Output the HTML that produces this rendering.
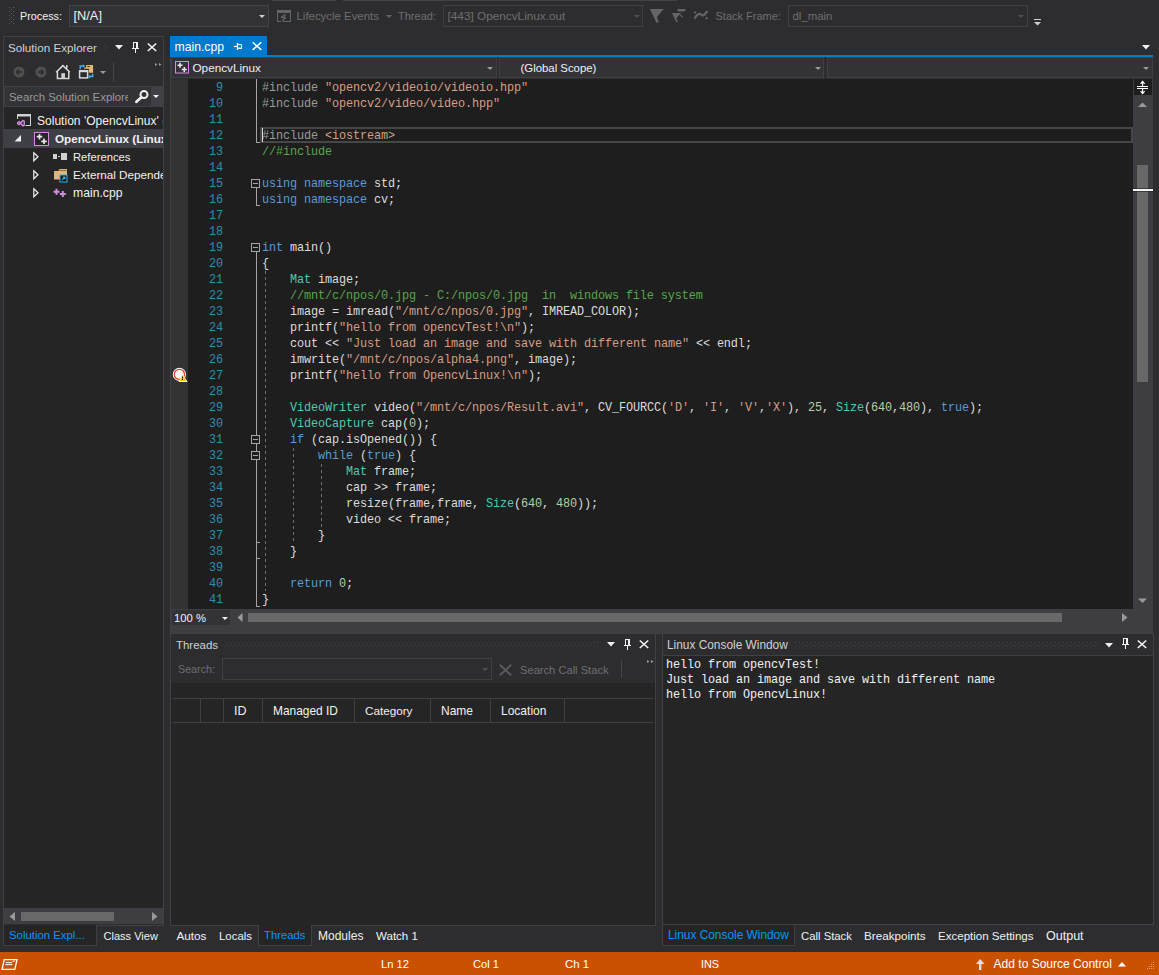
<!DOCTYPE html><html><head><meta charset="utf-8"><style>
html,body{margin:0;padding:0;}
body{width:1159px;height:975px;position:relative;overflow:hidden;background:#2d2d30;}
.a{position:absolute;}
.t{position:absolute;white-space:pre;}
svg.a{overflow:visible;}
</style></head><body>
<div class="a" style="left:272px;top:0px;width:64px;height:1px;background:#434346;"></div>
<div class="a" style="left:343px;top:0px;width:334px;height:1px;background:#434346;"></div>
<svg class="a" style="left:9px;top:7px;" width="5" height="17" viewBox="0 0 5 17"><rect x="0" y="0" width="1" height="1" fill="#5c5c60"/><rect x="4" y="0" width="1" height="1" fill="#5c5c60"/><rect x="2" y="2" width="1" height="1" fill="#5c5c60"/><rect x="0" y="4" width="1" height="1" fill="#5c5c60"/><rect x="4" y="4" width="1" height="1" fill="#5c5c60"/><rect x="2" y="6" width="1" height="1" fill="#5c5c60"/><rect x="0" y="8" width="1" height="1" fill="#5c5c60"/><rect x="4" y="8" width="1" height="1" fill="#5c5c60"/><rect x="2" y="10" width="1" height="1" fill="#5c5c60"/><rect x="0" y="12" width="1" height="1" fill="#5c5c60"/><rect x="4" y="12" width="1" height="1" fill="#5c5c60"/><rect x="2" y="14" width="1" height="1" fill="#5c5c60"/><rect x="0" y="16" width="1" height="1" fill="#5c5c60"/><rect x="4" y="16" width="1" height="1" fill="#5c5c60"/></svg>
<div class="t" style="left:20.00px;top:10px;font-size:10.797px;line-height:12px;color:#f1f1f1;font-family:'Liberation Sans', sans-serif;">Process:</div>
<div class="a" style="left:69px;top:5px;width:200px;height:22px;background:#333337;box-sizing:border-box;border:1px solid #434346;"></div>
<div class="t" style="left:73.50px;top:8px;font-size:12.821px;line-height:15px;color:#f1f1f1;font-family:'Liberation Sans', sans-serif;">[N/A]</div>
<svg class="a" style="left:259px;top:15px;" width="6" height="4" viewBox="0 0 6 4"><polygon points="0,0 6,0 3.0,3.0" fill="#d0d0d0"/></svg>
<svg class="a" style="left:277px;top:10px;" width="14" height="12" viewBox="0 0 14 12"><rect x="0" y="0" width="14" height="3" fill="#656565"/><rect x="0" y="0" width="1" height="12" fill="#656565"/><rect x="13" y="0" width="1" height="12" fill="#656565"/><rect x="0" y="11" width="4" height="1" fill="#656565"/><rect x="6" y="11" width="8" height="1" fill="#656565"/><path d="M8.8 4.4 L4.2 7.3 H8.7 L5.2 11" stroke="#656565" stroke-width="1.3" fill="none" stroke-linejoin="bevel"/></svg>
<div class="t" style="left:296.50px;top:10px;font-size:11.417px;line-height:12px;color:#6d6d6d;font-family:'Liberation Sans', sans-serif;">Lifecycle Events</div>
<svg class="a" style="left:386px;top:15px;" width="6" height="4" viewBox="0 0 6 4"><polygon points="0,0 6,0 3.0,3.0" fill="#656565"/></svg>
<div class="t" style="left:398.00px;top:10px;font-size:11.027px;line-height:12px;color:#6d6d6d;font-family:'Liberation Sans', sans-serif;">Thread:</div>
<div class="a" style="left:443px;top:5px;width:200px;height:22px;background:#2d2d30;box-sizing:border-box;border:1px solid #3f3f46;"></div>
<div class="t" style="left:447.50px;top:9px;font-size:11.792px;line-height:13px;color:#6d6d6d;font-family:'Liberation Sans', sans-serif;">[443] OpencvLinux.out</div>
<svg class="a" style="left:634px;top:15px;" width="6" height="4" viewBox="0 0 6 4"><polygon points="0,0 6,0 3.0,3.0" fill="#505050"/></svg>
<svg class="a" style="left:645px;top:5px;" width="67" height="22" viewBox="0 0 67 22"><path d="M4.9 4 H18.8 L11.9 12.1 L13.9 17.6 H11.3 Z" fill="#656565"/><path d="M32.1 4 H41 L39.3 6.6 H33.2 Z" fill="#656565"/><path d="M26.9 8.1 H36.1 L31.2 13.3 L33 17 H31.2 Z" fill="#656565"/><path d="M35.3 9.8 L37.6 12.4" stroke="#656565" stroke-width="1.2"/><path d="M49.5 13.5 C52 10, 54 7.5, 56 9.5 C58 11.5, 59.5 10, 62.5 6" stroke="#656565" stroke-width="2.2" fill="none"/><path d="M49.4 6.6 L50.8 8.2 M60.9 12.4 L62.4 14" stroke="#656565" stroke-width="2" fill="none"/></svg>
<div class="t" style="left:715.50px;top:10px;font-size:11.016px;line-height:12px;color:#6d6d6d;font-family:'Liberation Sans', sans-serif;">Stack Frame:</div>
<div class="a" style="left:788px;top:5px;width:240px;height:22px;background:#2d2d30;box-sizing:border-box;border:1px solid #3f3f46;"></div>
<div class="t" style="left:792.50px;top:10px;font-size:11.422px;line-height:12px;color:#6d6d6d;font-family:'Liberation Sans', sans-serif;">dl_main</div>
<svg class="a" style="left:1018px;top:15px;" width="6" height="4" viewBox="0 0 6 4"><polygon points="0,0 6,0 3.0,3.0" fill="#505050"/></svg>
<svg class="a" style="left:1034px;top:19px;" width="8" height="7" viewBox="0 0 8 7"><rect x="0" y="0" width="7" height="1" fill="#d0d0d0"/><polygon points="0,3 7,3 3.5,6.5" fill="#d0d0d0"/></svg>
<div class="a" style="left:3px;top:36px;width:161px;height:890px;background:#2d2d30;box-sizing:border-box;border:1px solid #3f3f46;"></div>
<div class="t" style="left:8.00px;top:41px;font-size:11.687px;line-height:13px;color:#d0d0d0;font-family:'Liberation Sans', sans-serif;">Solution Explorer</div>
<svg class="a" style="left:105px;top:45px;" width="4" height="5" viewBox="0 0 4 5"><rect x="0" y="0" width="1" height="1" fill="#46464a"/><rect x="2" y="2" width="1" height="1" fill="#46464a"/><rect x="0" y="4" width="1" height="1" fill="#46464a"/></svg>
<svg class="a" style="left:115px;top:45px;" width="8" height="5" viewBox="0 0 8 5"><polygon points="0,0 8,0 4,4.5" fill="#f1f1f1"/></svg>
<svg class="a" style="left:131px;top:42px;" width="9" height="11" viewBox="0 0 9 11"><path d="M2 0.5 H7 M2.5 0.5 V6 M6.5 0.5 V6 M1 6.5 H8 M4.5 7 V11" stroke="#f1f1f1" stroke-width="1" fill="none"/><rect x="5" y="1" width="1.5" height="5" fill="#f1f1f1"/></svg>
<svg class="a" style="left:147px;top:43px;" width="10" height="9" viewBox="0 0 10 9"><path d="M0.8 0.5 L9.2 8 M9.2 0.5 L0.8 8" stroke="#f1f1f1" stroke-width="1.6" fill="none"/></svg>
<svg class="a" style="left:13px;top:66px;" width="12" height="12" viewBox="0 0 12 12"><circle cx="6" cy="6" r="5.5" fill="#505050"/><path d="M9 6 H3.5 M6 3.5 L3.5 6 L6 8.5" stroke="#2d2d30" stroke-width="1.5" fill="none"/></svg>
<svg class="a" style="left:35px;top:66px;" width="12" height="12" viewBox="0 0 12 12"><circle cx="6" cy="6" r="5.5" fill="#505050"/><path d="M3 6 H8.5 M6 3.5 L8.5 6 L6 8.5" stroke="#2d2d30" stroke-width="1.5" fill="none"/></svg>
<svg class="a" style="left:55px;top:64px;" width="16" height="16" viewBox="0 0 16 16"><path d="M1.1 8.2 L7.9 1.6 L14.9 8.2 M2.4 7 V14.6 H13.8 V7 M11.8 1 V4.2" stroke="#d8d8d8" stroke-width="1.5" fill="none"/><rect x="6.3" y="9.2" width="3.7" height="5.4" fill="#cfcfcf"/></svg>
<svg class="a" style="left:78px;top:64px;" width="16" height="16" viewBox="0 0 16 16"><rect x="1.6" y="7" width="8" height="6.9" stroke="#d8d8d8" stroke-width="1.5" fill="none"/><rect x="1" y="6" width="9.2" height="2.2" fill="#d8d8d8"/><path d="M8.2 1 H15.1 V8.7 H11 V4.8 H6.1 V3.5 H8.2 Z" fill="#e8b870"/><rect x="9.3" y="2.1" width="2.8" height="0.9" fill="#2d2d30"/><path d="M2.2 5.2 V2 H5.2" stroke="#4aa8f0" stroke-width="1.5" fill="none"/><polygon points="4.8,0.2 7.3,2 4.8,3.8" fill="#4aa8f0"/><path d="M14.6 9.8 V12.6 H11.8" stroke="#4aa8f0" stroke-width="1.5" fill="none"/><polygon points="12.2,10.8 9.7,12.6 12.2,14.4" fill="#4aa8f0"/></svg>
<svg class="a" style="left:100px;top:71px;" width="7" height="4" viewBox="0 0 7 4"><polygon points="0,0 6,0 3,3" fill="#999"/></svg>
<div class="a" style="left:113px;top:62px;width:1px;height:20px;background:#46464a;"></div>
<svg class="a" style="left:155px;top:63px;" width="7" height="4" viewBox="0 0 7 4"><polygon points="0,0 2.5,1.5 0,3" fill="#999"/><polygon points="4,0 6.5,1.5 4,3" fill="#999"/></svg>
<div class="a" style="left:4px;top:86px;width:148px;height:21px;background:#333337;box-sizing:border-box;border:1px solid #3f3f46;"></div>
<div class="a" style="left:0;top:0;width:1159px;height:975px;clip-path:inset(87px 1031px 869px 5px);">
<div class="t" style="left:9.00px;top:91px;font-size:11.400px;line-height:12px;color:#999999;font-family:'Liberation Sans', sans-serif;">Search Solution Explorer (Ctrl+;)</div>
</div>
<svg class="a" style="left:135px;top:90px;" width="14" height="13" viewBox="0 0 14 13"><circle cx="9" cy="4.6" r="3.5" stroke="#f1f1f1" stroke-width="2" fill="none"/><path d="M6.4 7.3 L1.4 11.8" stroke="#f1f1f1" stroke-width="2.7" stroke-linecap="round"/></svg>
<div class="a" style="left:151px;top:86px;width:12px;height:21px;background:#3f3f46;"></div>
<svg class="a" style="left:153px;top:95px;" width="7" height="4" viewBox="0 0 7 4"><polygon points="0,0 6,0 3,3" fill="#f1f1f1"/></svg>
<div class="a" style="left:4px;top:107px;width:159px;height:801px;background:#252526;"></div>
<div class="a" style="left:0;top:0;width:1159px;height:975px;clip-path:inset(107px 996px 67px 4px);">
<div class="a" style="left:4px;top:129px;width:159px;height:19px;background:#3f3f46;"></div>
<svg class="a" style="left:17px;top:114px;" width="15" height="14" viewBox="0 0 15 14"><rect x="0" y="0" width="14" height="2.5" fill="#d0d0d0"/><rect x="0" y="0" width="1" height="5" fill="#d0d0d0"/><rect x="13" y="0" width="1" height="12" fill="#d0d0d0"/><rect x="8.5" y="11" width="5.5" height="1" fill="#d0d0d0"/><path d="M0.7 8.5 L2.2 7.6 L5.8 11.8 L7.2 11.2 V7.1 L5.8 6.5 L2.2 10.7 L0.7 9.9 Z" fill="none" stroke="#d28de0" stroke-width="1.4"/></svg>
<div class="t" style="left:37.00px;top:114px;font-size:12.067px;line-height:14px;color:#f1f1f1;font-family:'Liberation Sans', sans-serif;">Solution &#x27;OpencvLinux&#x27; (1 project)</div>
<svg class="a" style="left:14px;top:135px;" width="8" height="8" viewBox="0 0 8 8"><polygon points="7,0 7,6.5 0.5,6.5" fill="#f1f1f1"/></svg>
<svg class="a" style="left:34px;top:132px;" width="15" height="14" viewBox="0 0 15 14"><rect x="0.5" y="0.5" width="14" height="13" fill="#252526" stroke="#d28de0" stroke-width="1"/><path d="M2.7 4.7 H8.3 M5.5 1.9 V7.5 M7.2 9.3 H12.8 M10 6.5 V12.1" stroke="#e6e6e6" stroke-width="1.7"/></svg>
<div class="t" style="left:55.00px;top:132px;font-size:11.700px;line-height:13px;color:#f1f1f1;font-family:'Liberation Sans', sans-serif;font-weight:bold;">OpencvLinux (Linux)</div>
<svg class="a" style="left:33px;top:152px;" width="7" height="11" viewBox="0 0 7 11"><path d="M0.8 0.8 L5 4.8 L0.8 8.8 Z" stroke="#f1f1f1" stroke-width="1.2" fill="none"/></svg>
<svg class="a" style="left:52px;top:153px;" width="16" height="8" viewBox="0 0 16 8"><rect x="1" y="1" width="4" height="5" fill="#d0d0d0"/><rect x="6" y="3" width="2" height="1" fill="#d0d0d0"/><rect x="9" y="0" width="6" height="7" fill="#d0d0d0"/></svg>
<div class="t" style="left:73.00px;top:151px;font-size:11.244px;line-height:12px;color:#f1f1f1;font-family:'Liberation Sans', sans-serif;">References</div>
<svg class="a" style="left:33px;top:170px;" width="7" height="11" viewBox="0 0 7 11"><path d="M0.8 0.8 L5 4.8 L0.8 8.8 Z" stroke="#f1f1f1" stroke-width="1.2" fill="none"/></svg>
<svg class="a" style="left:53px;top:168px;" width="15" height="15" viewBox="0 0 15 15"><path d="M1 3 H5.5 L6.5 1 H14 V11.5 H1 Z" fill="#dcb67a"/><rect x="6.5" y="2" width="7" height="1" fill="#8a6d40"/><rect x="7" y="7" width="7" height="7" fill="#111" stroke="#3ab0f0" stroke-width="1"/><path d="M9 12 L12 9 M9.8 9 H12 V11.2" stroke="#3ab0f0" stroke-width="1.1" fill="none"/></svg>
<div class="t" style="left:73.00px;top:168px;font-size:11.700px;line-height:13px;color:#f1f1f1;font-family:'Liberation Sans', sans-serif;">External Dependencies</div>
<svg class="a" style="left:33px;top:188px;" width="7" height="11" viewBox="0 0 7 11"><path d="M0.8 0.8 L5 4.8 L0.8 8.8 Z" stroke="#f1f1f1" stroke-width="1.2" fill="none"/></svg>
<svg class="a" style="left:53px;top:188px;" width="14" height="10" viewBox="0 0 14 10"><path d="M0.5 3.8 H6.5 M3.5 0.8 V6.8 M6.8 6 H12.8 M9.8 3 V9" stroke="#d28de0" stroke-width="2" fill="none"/></svg>
<div class="t" style="left:73.00px;top:186px;font-size:12.198px;line-height:14px;color:#f1f1f1;font-family:'Liberation Sans', sans-serif;">main.cpp</div>
</div>
<div class="a" style="left:4px;top:908px;width:159px;height:16px;background:#3e3e42;"></div>
<svg class="a" style="left:9px;top:912px;" width="7" height="10" viewBox="0 0 7 10"><polygon points="6,0 6,9 0.5,4.5" fill="#999"/></svg>
<div class="a" style="left:21px;top:912px;width:93px;height:9px;background:#686868;"></div>
<svg class="a" style="left:152px;top:912px;" width="7" height="10" viewBox="0 0 7 10"><polygon points="0,0 0,9 5.5,4.5" fill="#999"/></svg>
<div class="a" style="left:170px;top:36px;width:97px;height:19px;background:#007acc;"></div>
<div class="t" style="left:174.50px;top:40px;font-size:12.198px;line-height:14px;color:#ffffff;font-family:'Liberation Sans', sans-serif;">main.cpp</div>
<svg class="a" style="left:233px;top:42px;" width="10" height="9" viewBox="0 0 10 9"><rect x="0.8" y="3.9" width="3.2" height="1.1" fill="#fff"/><rect x="3.8" y="0.9" width="1.2" height="7.1" fill="#fff"/><path d="M5 2.6 H8.5 V6.4 H5" stroke="#fff" stroke-width="1" fill="none"/><rect x="5" y="5.6" width="4" height="1.4" fill="#fff"/></svg>
<svg class="a" style="left:252px;top:42px;" width="10" height="9" viewBox="0 0 10 9"><path d="M0.7 0.3 L9.3 7.9 M9.3 0.3 L0.7 7.9" stroke="#fff" stroke-width="1.5" fill="none"/></svg>
<svg class="a" style="left:1142px;top:45px;" width="8" height="5" viewBox="0 0 8 5"><polygon points="0,0 8,0 4,4.5" fill="#f1f1f1"/></svg>
<div class="a" style="left:170px;top:55px;width:983px;height:2px;background:#007acc;"></div>
<div class="a" style="left:171px;top:57px;width:982px;height:22px;background:#2d2d30;"></div>
<div class="a" style="left:170px;top:57px;width:1px;height:577px;background:#3f3f46;"></div>
<div class="a" style="left:171px;top:57px;width:326px;height:21px;background:#333337;box-sizing:border-box;border:1px solid #3f3f46;"></div>
<div class="a" style="left:499px;top:57px;width:325px;height:21px;background:#333337;box-sizing:border-box;border:1px solid #3f3f46;"></div>
<div class="a" style="left:827px;top:57px;width:326px;height:21px;background:#333337;box-sizing:border-box;border:1px solid #3f3f46;"></div>
<svg class="a" style="left:175px;top:61px;" width="14" height="13" viewBox="0 0 14 13"><rect x="0.5" y="0.5" width="13" height="11.5" fill="#333337" stroke="#d28de0" stroke-width="1"/><path d="M2.5 4.3 H7.5 M5 1.8 V6.8 M6.8 8.5 H11.8 M9.3 6 V11" stroke="#e6e6e6" stroke-width="1.6"/></svg>
<div class="t" style="left:192.50px;top:61px;font-size:11.735px;line-height:13px;color:#f1f1f1;font-family:'Liberation Sans', sans-serif;">OpencvLinux</div>
<svg class="a" style="left:487px;top:67px;" width="6" height="4" viewBox="0 0 6 4"><polygon points="0,0 6,0 3.0,3.0" fill="#999999"/></svg>
<div class="t" style="left:520.50px;top:62px;font-size:11.394px;line-height:12px;color:#f1f1f1;font-family:'Liberation Sans', sans-serif;">(Global Scope)</div>
<svg class="a" style="left:815px;top:67px;" width="6" height="4" viewBox="0 0 6 4"><polygon points="0,0 6,0 3.0,3.0" fill="#999999"/></svg>
<svg class="a" style="left:1143px;top:67px;" width="6" height="4" viewBox="0 0 6 4"><polygon points="0,0 6,0 3.0,3.0" fill="#999999"/></svg>
<div class="a" style="left:171px;top:79px;width:962px;height:530px;background:#1e1e1e;"></div>
<div class="a" style="left:171px;top:79px;width:17px;height:530px;background:#333333;"></div>
<div class="a" style="left:1133px;top:79px;width:20px;height:530px;background:#3e3e42;"></div>
<div class="a" style="left:1134px;top:79px;width:18px;height:16px;background:#1e1e1e;"></div>
<svg class="a" style="left:1134px;top:79px;" width="18" height="16" viewBox="0 0 18 16"><path d="M3 7.5 H14 M3 9.5 H14" stroke="#fff" stroke-width="1.1"/><path d="M8.6 2.3 V7 M8.6 10 V14.7" stroke="#fff" stroke-width="1.1"/><polyline points="6.6,4.8 8.6,2.3 10.6,4.8" stroke="#fff" stroke-width="1.1" fill="none"/><polyline points="6.6,12.2 8.6,14.7 10.6,12.2" stroke="#fff" stroke-width="1.1" fill="none"/></svg>
<svg class="a" style="left:1138px;top:102px;" width="10" height="6" viewBox="0 0 10 6"><polygon points="0,5 9,5 4.5,0.5" fill="#999"/></svg>
<div class="a" style="left:1137px;top:165px;width:11px;height:217px;background:#686868;"></div>
<div class="a" style="left:1133px;top:188px;width:20px;height:4px;background:#1e1e1e;opacity:0.6"></div>
<div class="a" style="left:1133px;top:189px;width:20px;height:2px;background:#f4f4f4;"></div>
<svg class="a" style="left:1138px;top:598px;" width="10" height="6" viewBox="0 0 10 6"><polygon points="0,0.5 9,0.5 4.5,5" fill="#999"/></svg>
<div class="a" style="left:171px;top:609px;width:982px;height:25px;background:#3e3e42;"></div>
<div class="a" style="left:172px;top:610px;width:58px;height:15px;background:#333337;"></div>
<div class="t" style="left:174.00px;top:612px;font-size:11.287px;line-height:12px;color:#f1f1f1;font-family:'Liberation Sans', sans-serif;">100 %</div>
<svg class="a" style="left:222px;top:617px;" width="7" height="4" viewBox="0 0 7 4"><polygon points="0,0 6,0 3,3" fill="#f1f1f1"/></svg>
<svg class="a" style="left:237px;top:613px;" width="6" height="10" viewBox="0 0 6 10"><polygon points="5.5,0 5.5,9 0.5,4.5" fill="#999"/></svg>
<div class="a" style="left:248px;top:613px;width:814px;height:9px;background:#686868;"></div>
<svg class="a" style="left:1122px;top:613px;" width="6" height="10" viewBox="0 0 6 10"><polygon points="0,0 0,9 5.5,4.5" fill="#999"/></svg>
<div class="a" style="left:0;top:0;width:1159px;height:975px;clip-path:inset(79px 26px 366px 188px);">
<div class="a" style="left:260px;top:127px;width:873px;height:16px;box-sizing:border-box;border:2px solid #464646;"></div>
<div class="t" style="left:216px;top:81px;font-size:11.85px;letter-spacing:-0.110px;line-height:14px;color:#2b91af;font-family:'Liberation Mono',monospace;">9</div>
<div class="t" style="left:262px;top:81px;font-size:11.85px;letter-spacing:-0.110px;line-height:14px;font-family:'Liberation Mono',monospace;"><span style="color:#9b9b9b">#include</span><span style="color:#dcdcdc"> </span><span style="color:#d69d85">&quot;opencv2/videoio/videoio.hpp&quot;</span></div>
<div class="t" style="left:209px;top:97px;font-size:11.85px;letter-spacing:-0.110px;line-height:14px;color:#2b91af;font-family:'Liberation Mono',monospace;">10</div>
<div class="t" style="left:262px;top:97px;font-size:11.85px;letter-spacing:-0.110px;line-height:14px;font-family:'Liberation Mono',monospace;"><span style="color:#9b9b9b">#include</span><span style="color:#dcdcdc"> </span><span style="color:#d69d85">&quot;opencv2/video/video.hpp&quot;</span></div>
<div class="t" style="left:209px;top:113px;font-size:11.85px;letter-spacing:-0.110px;line-height:14px;color:#2b91af;font-family:'Liberation Mono',monospace;">11</div>
<div class="t" style="left:209px;top:129px;font-size:11.85px;letter-spacing:-0.110px;line-height:14px;color:#2b91af;font-family:'Liberation Mono',monospace;">12</div>
<div class="t" style="left:262px;top:129px;font-size:11.85px;letter-spacing:-0.110px;line-height:14px;font-family:'Liberation Mono',monospace;"><span style="color:#9b9b9b">#include</span><span style="color:#dcdcdc"> </span><span style="color:#d69d85">&lt;iostream&gt;</span></div>
<div class="t" style="left:209px;top:145px;font-size:11.85px;letter-spacing:-0.110px;line-height:14px;color:#2b91af;font-family:'Liberation Mono',monospace;">13</div>
<div class="t" style="left:262px;top:145px;font-size:11.85px;letter-spacing:-0.110px;line-height:14px;font-family:'Liberation Mono',monospace;"><span style="color:#57a64a">//#include</span></div>
<div class="t" style="left:209px;top:161px;font-size:11.85px;letter-spacing:-0.110px;line-height:14px;color:#2b91af;font-family:'Liberation Mono',monospace;">14</div>
<div class="t" style="left:209px;top:177px;font-size:11.85px;letter-spacing:-0.110px;line-height:14px;color:#2b91af;font-family:'Liberation Mono',monospace;">15</div>
<div class="t" style="left:262px;top:177px;font-size:11.85px;letter-spacing:-0.110px;line-height:14px;font-family:'Liberation Mono',monospace;"><span style="color:#569cd6">using</span><span style="color:#dcdcdc"> </span><span style="color:#569cd6">namespace</span><span style="color:#dcdcdc"> </span><span style="color:#dcdcdc">std</span><span style="color:#dcdcdc">;</span></div>
<div class="t" style="left:209px;top:193px;font-size:11.85px;letter-spacing:-0.110px;line-height:14px;color:#2b91af;font-family:'Liberation Mono',monospace;">16</div>
<div class="t" style="left:262px;top:193px;font-size:11.85px;letter-spacing:-0.110px;line-height:14px;font-family:'Liberation Mono',monospace;"><span style="color:#569cd6">using</span><span style="color:#dcdcdc"> </span><span style="color:#569cd6">namespace</span><span style="color:#dcdcdc"> </span><span style="color:#dcdcdc">cv</span><span style="color:#dcdcdc">;</span></div>
<div class="t" style="left:209px;top:209px;font-size:11.85px;letter-spacing:-0.110px;line-height:14px;color:#2b91af;font-family:'Liberation Mono',monospace;">17</div>
<div class="t" style="left:209px;top:225px;font-size:11.85px;letter-spacing:-0.110px;line-height:14px;color:#2b91af;font-family:'Liberation Mono',monospace;">18</div>
<div class="t" style="left:209px;top:241px;font-size:11.85px;letter-spacing:-0.110px;line-height:14px;color:#2b91af;font-family:'Liberation Mono',monospace;">19</div>
<div class="t" style="left:262px;top:241px;font-size:11.85px;letter-spacing:-0.110px;line-height:14px;font-family:'Liberation Mono',monospace;"><span style="color:#569cd6">int</span><span style="color:#dcdcdc"> </span><span style="color:#dcdcdc">main</span><span style="color:#dcdcdc">(</span><span style="color:#dcdcdc">)</span></div>
<div class="t" style="left:209px;top:257px;font-size:11.85px;letter-spacing:-0.110px;line-height:14px;color:#2b91af;font-family:'Liberation Mono',monospace;">20</div>
<div class="t" style="left:262px;top:257px;font-size:11.85px;letter-spacing:-0.110px;line-height:14px;font-family:'Liberation Mono',monospace;"><span style="color:#dcdcdc">{</span></div>
<div class="t" style="left:209px;top:273px;font-size:11.85px;letter-spacing:-0.110px;line-height:14px;color:#2b91af;font-family:'Liberation Mono',monospace;">21</div>
<div class="t" style="left:262px;top:273px;font-size:11.85px;letter-spacing:-0.110px;line-height:14px;font-family:'Liberation Mono',monospace;"><span style="color:#dcdcdc"> </span><span style="color:#dcdcdc"> </span><span style="color:#dcdcdc"> </span><span style="color:#dcdcdc"> </span><span style="color:#4ec9b0">Mat</span><span style="color:#dcdcdc"> </span><span style="color:#dcdcdc">image</span><span style="color:#dcdcdc">;</span></div>
<div class="t" style="left:209px;top:289px;font-size:11.85px;letter-spacing:-0.110px;line-height:14px;color:#2b91af;font-family:'Liberation Mono',monospace;">22</div>
<div class="t" style="left:262px;top:289px;font-size:11.85px;letter-spacing:-0.110px;line-height:14px;font-family:'Liberation Mono',monospace;"><span style="color:#dcdcdc"> </span><span style="color:#dcdcdc"> </span><span style="color:#dcdcdc"> </span><span style="color:#dcdcdc"> </span><span style="color:#57a64a">//mnt/c/npos/0.jpg - C:/npos/0.jpg  in  windows file system</span></div>
<div class="t" style="left:209px;top:305px;font-size:11.85px;letter-spacing:-0.110px;line-height:14px;color:#2b91af;font-family:'Liberation Mono',monospace;">23</div>
<div class="t" style="left:262px;top:305px;font-size:11.85px;letter-spacing:-0.110px;line-height:14px;font-family:'Liberation Mono',monospace;"><span style="color:#dcdcdc"> </span><span style="color:#dcdcdc"> </span><span style="color:#dcdcdc"> </span><span style="color:#dcdcdc"> </span><span style="color:#dcdcdc">image</span><span style="color:#dcdcdc"> </span><span style="color:#dcdcdc">=</span><span style="color:#dcdcdc"> </span><span style="color:#dcdcdc">imread</span><span style="color:#dcdcdc">(</span><span style="color:#d69d85">&quot;/mnt/c/npos/0.jpg&quot;</span><span style="color:#dcdcdc">,</span><span style="color:#dcdcdc"> </span><span style="color:#dcdcdc">IMREAD_COLOR</span><span style="color:#dcdcdc">)</span><span style="color:#dcdcdc">;</span></div>
<div class="t" style="left:209px;top:321px;font-size:11.85px;letter-spacing:-0.110px;line-height:14px;color:#2b91af;font-family:'Liberation Mono',monospace;">24</div>
<div class="t" style="left:262px;top:321px;font-size:11.85px;letter-spacing:-0.110px;line-height:14px;font-family:'Liberation Mono',monospace;"><span style="color:#dcdcdc"> </span><span style="color:#dcdcdc"> </span><span style="color:#dcdcdc"> </span><span style="color:#dcdcdc"> </span><span style="color:#dcdcdc">printf</span><span style="color:#dcdcdc">(</span><span style="color:#d69d85">&quot;hello from opencvTest!\n&quot;</span><span style="color:#dcdcdc">)</span><span style="color:#dcdcdc">;</span></div>
<div class="t" style="left:209px;top:337px;font-size:11.85px;letter-spacing:-0.110px;line-height:14px;color:#2b91af;font-family:'Liberation Mono',monospace;">25</div>
<div class="t" style="left:262px;top:337px;font-size:11.85px;letter-spacing:-0.110px;line-height:14px;font-family:'Liberation Mono',monospace;"><span style="color:#dcdcdc"> </span><span style="color:#dcdcdc"> </span><span style="color:#dcdcdc"> </span><span style="color:#dcdcdc"> </span><span style="color:#dcdcdc">cout</span><span style="color:#dcdcdc"> </span><span style="color:#dcdcdc">&lt;</span><span style="color:#dcdcdc">&lt;</span><span style="color:#dcdcdc"> </span><span style="color:#d69d85">&quot;Just load an image and save with different name&quot;</span><span style="color:#dcdcdc"> </span><span style="color:#dcdcdc">&lt;</span><span style="color:#dcdcdc">&lt;</span><span style="color:#dcdcdc"> </span><span style="color:#dcdcdc">endl</span><span style="color:#dcdcdc">;</span></div>
<div class="t" style="left:209px;top:353px;font-size:11.85px;letter-spacing:-0.110px;line-height:14px;color:#2b91af;font-family:'Liberation Mono',monospace;">26</div>
<div class="t" style="left:262px;top:353px;font-size:11.85px;letter-spacing:-0.110px;line-height:14px;font-family:'Liberation Mono',monospace;"><span style="color:#dcdcdc"> </span><span style="color:#dcdcdc"> </span><span style="color:#dcdcdc"> </span><span style="color:#dcdcdc"> </span><span style="color:#dcdcdc">imwrite</span><span style="color:#dcdcdc">(</span><span style="color:#d69d85">&quot;/mnt/c/npos/alpha4.png&quot;</span><span style="color:#dcdcdc">,</span><span style="color:#dcdcdc"> </span><span style="color:#dcdcdc">image</span><span style="color:#dcdcdc">)</span><span style="color:#dcdcdc">;</span></div>
<div class="t" style="left:209px;top:369px;font-size:11.85px;letter-spacing:-0.110px;line-height:14px;color:#2b91af;font-family:'Liberation Mono',monospace;">27</div>
<div class="t" style="left:262px;top:369px;font-size:11.85px;letter-spacing:-0.110px;line-height:14px;font-family:'Liberation Mono',monospace;"><span style="color:#dcdcdc"> </span><span style="color:#dcdcdc"> </span><span style="color:#dcdcdc"> </span><span style="color:#dcdcdc"> </span><span style="color:#dcdcdc">printf</span><span style="color:#dcdcdc">(</span><span style="color:#d69d85">&quot;hello from OpencvLinux!\n&quot;</span><span style="color:#dcdcdc">)</span><span style="color:#dcdcdc">;</span></div>
<div class="t" style="left:209px;top:385px;font-size:11.85px;letter-spacing:-0.110px;line-height:14px;color:#2b91af;font-family:'Liberation Mono',monospace;">28</div>
<div class="t" style="left:209px;top:401px;font-size:11.85px;letter-spacing:-0.110px;line-height:14px;color:#2b91af;font-family:'Liberation Mono',monospace;">29</div>
<div class="t" style="left:262px;top:401px;font-size:11.85px;letter-spacing:-0.110px;line-height:14px;font-family:'Liberation Mono',monospace;"><span style="color:#dcdcdc"> </span><span style="color:#dcdcdc"> </span><span style="color:#dcdcdc"> </span><span style="color:#dcdcdc"> </span><span style="color:#4ec9b0">VideoWriter</span><span style="color:#dcdcdc"> </span><span style="color:#dcdcdc">video</span><span style="color:#dcdcdc">(</span><span style="color:#d69d85">&quot;/mnt/c/npos/Result.avi&quot;</span><span style="color:#dcdcdc">,</span><span style="color:#dcdcdc"> </span><span style="color:#dcdcdc">CV_FOURCC</span><span style="color:#dcdcdc">(</span><span style="color:#d69d85">&#x27;D&#x27;</span><span style="color:#dcdcdc">,</span><span style="color:#dcdcdc"> </span><span style="color:#d69d85">&#x27;I&#x27;</span><span style="color:#dcdcdc">,</span><span style="color:#dcdcdc"> </span><span style="color:#d69d85">&#x27;V&#x27;</span><span style="color:#dcdcdc">,</span><span style="color:#d69d85">&#x27;X&#x27;</span><span style="color:#dcdcdc">)</span><span style="color:#dcdcdc">,</span><span style="color:#dcdcdc"> </span><span style="color:#b5cea8">25</span><span style="color:#dcdcdc">,</span><span style="color:#dcdcdc"> </span><span style="color:#4ec9b0">Size</span><span style="color:#dcdcdc">(</span><span style="color:#b5cea8">640</span><span style="color:#dcdcdc">,</span><span style="color:#b5cea8">480</span><span style="color:#dcdcdc">)</span><span style="color:#dcdcdc">,</span><span style="color:#dcdcdc"> </span><span style="color:#569cd6">true</span><span style="color:#dcdcdc">)</span><span style="color:#dcdcdc">;</span></div>
<div class="t" style="left:209px;top:417px;font-size:11.85px;letter-spacing:-0.110px;line-height:14px;color:#2b91af;font-family:'Liberation Mono',monospace;">30</div>
<div class="t" style="left:262px;top:417px;font-size:11.85px;letter-spacing:-0.110px;line-height:14px;font-family:'Liberation Mono',monospace;"><span style="color:#dcdcdc"> </span><span style="color:#dcdcdc"> </span><span style="color:#dcdcdc"> </span><span style="color:#dcdcdc"> </span><span style="color:#4ec9b0">VideoCapture</span><span style="color:#dcdcdc"> </span><span style="color:#dcdcdc">cap</span><span style="color:#dcdcdc">(</span><span style="color:#b5cea8">0</span><span style="color:#dcdcdc">)</span><span style="color:#dcdcdc">;</span></div>
<div class="t" style="left:209px;top:433px;font-size:11.85px;letter-spacing:-0.110px;line-height:14px;color:#2b91af;font-family:'Liberation Mono',monospace;">31</div>
<div class="t" style="left:262px;top:433px;font-size:11.85px;letter-spacing:-0.110px;line-height:14px;font-family:'Liberation Mono',monospace;"><span style="color:#dcdcdc"> </span><span style="color:#dcdcdc"> </span><span style="color:#dcdcdc"> </span><span style="color:#dcdcdc"> </span><span style="color:#569cd6">if</span><span style="color:#dcdcdc"> </span><span style="color:#dcdcdc">(</span><span style="color:#dcdcdc">cap</span><span style="color:#dcdcdc">.</span><span style="color:#dcdcdc">isOpened</span><span style="color:#dcdcdc">(</span><span style="color:#dcdcdc">)</span><span style="color:#dcdcdc">)</span><span style="color:#dcdcdc"> </span><span style="color:#dcdcdc">{</span></div>
<div class="t" style="left:209px;top:449px;font-size:11.85px;letter-spacing:-0.110px;line-height:14px;color:#2b91af;font-family:'Liberation Mono',monospace;">32</div>
<div class="t" style="left:262px;top:449px;font-size:11.85px;letter-spacing:-0.110px;line-height:14px;font-family:'Liberation Mono',monospace;"><span style="color:#dcdcdc"> </span><span style="color:#dcdcdc"> </span><span style="color:#dcdcdc"> </span><span style="color:#dcdcdc"> </span><span style="color:#dcdcdc"> </span><span style="color:#dcdcdc"> </span><span style="color:#dcdcdc"> </span><span style="color:#dcdcdc"> </span><span style="color:#569cd6">while</span><span style="color:#dcdcdc"> </span><span style="color:#dcdcdc">(</span><span style="color:#569cd6">true</span><span style="color:#dcdcdc">)</span><span style="color:#dcdcdc"> </span><span style="color:#dcdcdc">{</span></div>
<div class="t" style="left:209px;top:465px;font-size:11.85px;letter-spacing:-0.110px;line-height:14px;color:#2b91af;font-family:'Liberation Mono',monospace;">33</div>
<div class="t" style="left:262px;top:465px;font-size:11.85px;letter-spacing:-0.110px;line-height:14px;font-family:'Liberation Mono',monospace;"><span style="color:#dcdcdc"> </span><span style="color:#dcdcdc"> </span><span style="color:#dcdcdc"> </span><span style="color:#dcdcdc"> </span><span style="color:#dcdcdc"> </span><span style="color:#dcdcdc"> </span><span style="color:#dcdcdc"> </span><span style="color:#dcdcdc"> </span><span style="color:#dcdcdc"> </span><span style="color:#dcdcdc"> </span><span style="color:#dcdcdc"> </span><span style="color:#dcdcdc"> </span><span style="color:#4ec9b0">Mat</span><span style="color:#dcdcdc"> </span><span style="color:#dcdcdc">frame</span><span style="color:#dcdcdc">;</span></div>
<div class="t" style="left:209px;top:481px;font-size:11.85px;letter-spacing:-0.110px;line-height:14px;color:#2b91af;font-family:'Liberation Mono',monospace;">34</div>
<div class="t" style="left:262px;top:481px;font-size:11.85px;letter-spacing:-0.110px;line-height:14px;font-family:'Liberation Mono',monospace;"><span style="color:#dcdcdc"> </span><span style="color:#dcdcdc"> </span><span style="color:#dcdcdc"> </span><span style="color:#dcdcdc"> </span><span style="color:#dcdcdc"> </span><span style="color:#dcdcdc"> </span><span style="color:#dcdcdc"> </span><span style="color:#dcdcdc"> </span><span style="color:#dcdcdc"> </span><span style="color:#dcdcdc"> </span><span style="color:#dcdcdc"> </span><span style="color:#dcdcdc"> </span><span style="color:#dcdcdc">cap</span><span style="color:#dcdcdc"> </span><span style="color:#dcdcdc">&gt;</span><span style="color:#dcdcdc">&gt;</span><span style="color:#dcdcdc"> </span><span style="color:#dcdcdc">frame</span><span style="color:#dcdcdc">;</span></div>
<div class="t" style="left:209px;top:497px;font-size:11.85px;letter-spacing:-0.110px;line-height:14px;color:#2b91af;font-family:'Liberation Mono',monospace;">35</div>
<div class="t" style="left:262px;top:497px;font-size:11.85px;letter-spacing:-0.110px;line-height:14px;font-family:'Liberation Mono',monospace;"><span style="color:#dcdcdc"> </span><span style="color:#dcdcdc"> </span><span style="color:#dcdcdc"> </span><span style="color:#dcdcdc"> </span><span style="color:#dcdcdc"> </span><span style="color:#dcdcdc"> </span><span style="color:#dcdcdc"> </span><span style="color:#dcdcdc"> </span><span style="color:#dcdcdc"> </span><span style="color:#dcdcdc"> </span><span style="color:#dcdcdc"> </span><span style="color:#dcdcdc"> </span><span style="color:#dcdcdc">resize</span><span style="color:#dcdcdc">(</span><span style="color:#dcdcdc">frame</span><span style="color:#dcdcdc">,</span><span style="color:#dcdcdc">frame</span><span style="color:#dcdcdc">,</span><span style="color:#dcdcdc"> </span><span style="color:#4ec9b0">Size</span><span style="color:#dcdcdc">(</span><span style="color:#b5cea8">640</span><span style="color:#dcdcdc">,</span><span style="color:#dcdcdc"> </span><span style="color:#b5cea8">480</span><span style="color:#dcdcdc">)</span><span style="color:#dcdcdc">)</span><span style="color:#dcdcdc">;</span></div>
<div class="t" style="left:209px;top:513px;font-size:11.85px;letter-spacing:-0.110px;line-height:14px;color:#2b91af;font-family:'Liberation Mono',monospace;">36</div>
<div class="t" style="left:262px;top:513px;font-size:11.85px;letter-spacing:-0.110px;line-height:14px;font-family:'Liberation Mono',monospace;"><span style="color:#dcdcdc"> </span><span style="color:#dcdcdc"> </span><span style="color:#dcdcdc"> </span><span style="color:#dcdcdc"> </span><span style="color:#dcdcdc"> </span><span style="color:#dcdcdc"> </span><span style="color:#dcdcdc"> </span><span style="color:#dcdcdc"> </span><span style="color:#dcdcdc"> </span><span style="color:#dcdcdc"> </span><span style="color:#dcdcdc"> </span><span style="color:#dcdcdc"> </span><span style="color:#dcdcdc">video</span><span style="color:#dcdcdc"> </span><span style="color:#dcdcdc">&lt;</span><span style="color:#dcdcdc">&lt;</span><span style="color:#dcdcdc"> </span><span style="color:#dcdcdc">frame</span><span style="color:#dcdcdc">;</span></div>
<div class="t" style="left:209px;top:529px;font-size:11.85px;letter-spacing:-0.110px;line-height:14px;color:#2b91af;font-family:'Liberation Mono',monospace;">37</div>
<div class="t" style="left:262px;top:529px;font-size:11.85px;letter-spacing:-0.110px;line-height:14px;font-family:'Liberation Mono',monospace;"><span style="color:#dcdcdc"> </span><span style="color:#dcdcdc"> </span><span style="color:#dcdcdc"> </span><span style="color:#dcdcdc"> </span><span style="color:#dcdcdc"> </span><span style="color:#dcdcdc"> </span><span style="color:#dcdcdc"> </span><span style="color:#dcdcdc"> </span><span style="color:#dcdcdc">}</span></div>
<div class="t" style="left:209px;top:545px;font-size:11.85px;letter-spacing:-0.110px;line-height:14px;color:#2b91af;font-family:'Liberation Mono',monospace;">38</div>
<div class="t" style="left:262px;top:545px;font-size:11.85px;letter-spacing:-0.110px;line-height:14px;font-family:'Liberation Mono',monospace;"><span style="color:#dcdcdc"> </span><span style="color:#dcdcdc"> </span><span style="color:#dcdcdc"> </span><span style="color:#dcdcdc"> </span><span style="color:#dcdcdc">}</span></div>
<div class="t" style="left:209px;top:561px;font-size:11.85px;letter-spacing:-0.110px;line-height:14px;color:#2b91af;font-family:'Liberation Mono',monospace;">39</div>
<div class="t" style="left:209px;top:577px;font-size:11.85px;letter-spacing:-0.110px;line-height:14px;color:#2b91af;font-family:'Liberation Mono',monospace;">40</div>
<div class="t" style="left:262px;top:577px;font-size:11.85px;letter-spacing:-0.110px;line-height:14px;font-family:'Liberation Mono',monospace;"><span style="color:#dcdcdc"> </span><span style="color:#dcdcdc"> </span><span style="color:#dcdcdc"> </span><span style="color:#dcdcdc"> </span><span style="color:#569cd6">return</span><span style="color:#dcdcdc"> </span><span style="color:#b5cea8">0</span><span style="color:#dcdcdc">;</span></div>
<div class="t" style="left:209px;top:593px;font-size:11.85px;letter-spacing:-0.110px;line-height:14px;color:#2b91af;font-family:'Liberation Mono',monospace;">41</div>
<div class="t" style="left:262px;top:593px;font-size:11.85px;letter-spacing:-0.110px;line-height:14px;font-family:'Liberation Mono',monospace;"><span style="color:#dcdcdc">}</span></div>
</div>
<div class="a" style="left:256px;top:79px;width:1px;height:64px;background:#a5a5a5;"></div>
<div class="a" style="left:256px;top:142px;width:4px;height:1px;background:#a5a5a5;"></div>
<svg class="a" style="left:251px;top:179px;" width="9" height="9" viewBox="0 0 9 9"><rect x="0.5" y="0.5" width="8" height="8" fill="#1e1e1e" stroke="#a5a5a5"/><path d="M2 4.5 H7" stroke="#a5a5a5"/></svg>
<div class="a" style="left:256px;top:188px;width:1px;height:18px;background:#a5a5a5;"></div>
<div class="a" style="left:256px;top:205px;width:4px;height:1px;background:#a5a5a5;"></div>
<svg class="a" style="left:251px;top:243px;" width="9" height="9" viewBox="0 0 9 9"><rect x="0.5" y="0.5" width="8" height="8" fill="#1e1e1e" stroke="#a5a5a5"/><path d="M2 4.5 H7" stroke="#a5a5a5"/></svg>
<div class="a" style="left:256px;top:252px;width:1px;height:355px;background:#a5a5a5;"></div>
<div class="a" style="left:256px;top:606px;width:4px;height:1px;background:#a5a5a5;"></div>
<svg class="a" style="left:251px;top:435px;" width="9" height="9" viewBox="0 0 9 9"><rect x="0.5" y="0.5" width="8" height="8" fill="#1e1e1e" stroke="#a5a5a5"/><path d="M2 4.5 H7" stroke="#a5a5a5"/></svg>
<svg class="a" style="left:251px;top:451px;" width="9" height="9" viewBox="0 0 9 9"><rect x="0.5" y="0.5" width="8" height="8" fill="#1e1e1e" stroke="#a5a5a5"/><path d="M2 4.5 H7" stroke="#a5a5a5"/></svg>
<div class="a" style="left:256px;top:542px;width:4px;height:1px;background:#a5a5a5;"></div>
<div class="a" style="left:256px;top:558px;width:4px;height:1px;background:#a5a5a5;"></div>
<div class="a" style="left:262px;top:128px;width:1px;height:14px;background:#dcdcdc;"></div>
<svg class="a" style="left:265px;top:271px;" width="1" height="320" viewBox="0 0 1 320"><line x1="0.5" y1="0" x2="0.5" y2="320" stroke="#6e6e6e" stroke-dasharray="3,3"/></svg>
<svg class="a" style="left:293px;top:448px;" width="1" height="95" viewBox="0 0 1 95"><line x1="0.5" y1="0" x2="0.5" y2="95" stroke="#6e6e6e" stroke-dasharray="3,3"/></svg>
<svg class="a" style="left:321px;top:464px;" width="1" height="63" viewBox="0 0 1 63"><line x1="0.5" y1="0" x2="0.5" y2="63" stroke="#6e6e6e" stroke-dasharray="3,3"/></svg>
<svg class="a" style="left:172px;top:366px;" width="17" height="17" viewBox="0 0 17 17"><circle cx="7.4" cy="8.4" r="6.6" fill="#ffffff"/><circle cx="7.4" cy="8.4" r="5.1" fill="#ffffff" stroke="#e8412c" stroke-width="1.3"/><polygon points="10.4,7.4 6.6,15.9 15.6,15.9" fill="#ffffff"/><polygon points="10.4,8.6 7.6,15.1 14.6,15.1" fill="#f7c800"/><rect x="10" y="10.6" width="1" height="1.8" fill="#111"/><rect x="10" y="13" width="1" height="1" fill="#111"/></svg>
<div class="a" style="left:170px;top:633px;width:486px;height:293px;background:#2d2d30;box-sizing:border-box;border:1px solid #3f3f46;"></div>
<div class="t" style="left:176.00px;top:639px;font-size:11.450px;line-height:12px;color:#d0d0d0;font-family:'Liberation Sans', sans-serif;">Threads</div>
<svg class="a" style="left:225px;top:642px;" width="376" height="5" viewBox="0 0 376 5"><rect x="0" y="0" width="1" height="1" fill="#46464a"/><rect x="4" y="0" width="1" height="1" fill="#46464a"/><rect x="8" y="0" width="1" height="1" fill="#46464a"/><rect x="12" y="0" width="1" height="1" fill="#46464a"/><rect x="16" y="0" width="1" height="1" fill="#46464a"/><rect x="20" y="0" width="1" height="1" fill="#46464a"/><rect x="24" y="0" width="1" height="1" fill="#46464a"/><rect x="28" y="0" width="1" height="1" fill="#46464a"/><rect x="32" y="0" width="1" height="1" fill="#46464a"/><rect x="36" y="0" width="1" height="1" fill="#46464a"/><rect x="40" y="0" width="1" height="1" fill="#46464a"/><rect x="44" y="0" width="1" height="1" fill="#46464a"/><rect x="48" y="0" width="1" height="1" fill="#46464a"/><rect x="52" y="0" width="1" height="1" fill="#46464a"/><rect x="56" y="0" width="1" height="1" fill="#46464a"/><rect x="60" y="0" width="1" height="1" fill="#46464a"/><rect x="64" y="0" width="1" height="1" fill="#46464a"/><rect x="68" y="0" width="1" height="1" fill="#46464a"/><rect x="72" y="0" width="1" height="1" fill="#46464a"/><rect x="76" y="0" width="1" height="1" fill="#46464a"/><rect x="80" y="0" width="1" height="1" fill="#46464a"/><rect x="84" y="0" width="1" height="1" fill="#46464a"/><rect x="88" y="0" width="1" height="1" fill="#46464a"/><rect x="92" y="0" width="1" height="1" fill="#46464a"/><rect x="96" y="0" width="1" height="1" fill="#46464a"/><rect x="100" y="0" width="1" height="1" fill="#46464a"/><rect x="104" y="0" width="1" height="1" fill="#46464a"/><rect x="108" y="0" width="1" height="1" fill="#46464a"/><rect x="112" y="0" width="1" height="1" fill="#46464a"/><rect x="116" y="0" width="1" height="1" fill="#46464a"/><rect x="120" y="0" width="1" height="1" fill="#46464a"/><rect x="124" y="0" width="1" height="1" fill="#46464a"/><rect x="128" y="0" width="1" height="1" fill="#46464a"/><rect x="132" y="0" width="1" height="1" fill="#46464a"/><rect x="136" y="0" width="1" height="1" fill="#46464a"/><rect x="140" y="0" width="1" height="1" fill="#46464a"/><rect x="144" y="0" width="1" height="1" fill="#46464a"/><rect x="148" y="0" width="1" height="1" fill="#46464a"/><rect x="152" y="0" width="1" height="1" fill="#46464a"/><rect x="156" y="0" width="1" height="1" fill="#46464a"/><rect x="160" y="0" width="1" height="1" fill="#46464a"/><rect x="164" y="0" width="1" height="1" fill="#46464a"/><rect x="168" y="0" width="1" height="1" fill="#46464a"/><rect x="172" y="0" width="1" height="1" fill="#46464a"/><rect x="176" y="0" width="1" height="1" fill="#46464a"/><rect x="180" y="0" width="1" height="1" fill="#46464a"/><rect x="184" y="0" width="1" height="1" fill="#46464a"/><rect x="188" y="0" width="1" height="1" fill="#46464a"/><rect x="192" y="0" width="1" height="1" fill="#46464a"/><rect x="196" y="0" width="1" height="1" fill="#46464a"/><rect x="200" y="0" width="1" height="1" fill="#46464a"/><rect x="204" y="0" width="1" height="1" fill="#46464a"/><rect x="208" y="0" width="1" height="1" fill="#46464a"/><rect x="212" y="0" width="1" height="1" fill="#46464a"/><rect x="216" y="0" width="1" height="1" fill="#46464a"/><rect x="220" y="0" width="1" height="1" fill="#46464a"/><rect x="224" y="0" width="1" height="1" fill="#46464a"/><rect x="228" y="0" width="1" height="1" fill="#46464a"/><rect x="232" y="0" width="1" height="1" fill="#46464a"/><rect x="236" y="0" width="1" height="1" fill="#46464a"/><rect x="240" y="0" width="1" height="1" fill="#46464a"/><rect x="244" y="0" width="1" height="1" fill="#46464a"/><rect x="248" y="0" width="1" height="1" fill="#46464a"/><rect x="252" y="0" width="1" height="1" fill="#46464a"/><rect x="256" y="0" width="1" height="1" fill="#46464a"/><rect x="260" y="0" width="1" height="1" fill="#46464a"/><rect x="264" y="0" width="1" height="1" fill="#46464a"/><rect x="268" y="0" width="1" height="1" fill="#46464a"/><rect x="272" y="0" width="1" height="1" fill="#46464a"/><rect x="276" y="0" width="1" height="1" fill="#46464a"/><rect x="280" y="0" width="1" height="1" fill="#46464a"/><rect x="284" y="0" width="1" height="1" fill="#46464a"/><rect x="288" y="0" width="1" height="1" fill="#46464a"/><rect x="292" y="0" width="1" height="1" fill="#46464a"/><rect x="296" y="0" width="1" height="1" fill="#46464a"/><rect x="300" y="0" width="1" height="1" fill="#46464a"/><rect x="304" y="0" width="1" height="1" fill="#46464a"/><rect x="308" y="0" width="1" height="1" fill="#46464a"/><rect x="312" y="0" width="1" height="1" fill="#46464a"/><rect x="316" y="0" width="1" height="1" fill="#46464a"/><rect x="320" y="0" width="1" height="1" fill="#46464a"/><rect x="324" y="0" width="1" height="1" fill="#46464a"/><rect x="328" y="0" width="1" height="1" fill="#46464a"/><rect x="332" y="0" width="1" height="1" fill="#46464a"/><rect x="336" y="0" width="1" height="1" fill="#46464a"/><rect x="340" y="0" width="1" height="1" fill="#46464a"/><rect x="344" y="0" width="1" height="1" fill="#46464a"/><rect x="348" y="0" width="1" height="1" fill="#46464a"/><rect x="352" y="0" width="1" height="1" fill="#46464a"/><rect x="356" y="0" width="1" height="1" fill="#46464a"/><rect x="360" y="0" width="1" height="1" fill="#46464a"/><rect x="364" y="0" width="1" height="1" fill="#46464a"/><rect x="368" y="0" width="1" height="1" fill="#46464a"/><rect x="372" y="0" width="1" height="1" fill="#46464a"/><rect x="2" y="2" width="1" height="1" fill="#46464a"/><rect x="6" y="2" width="1" height="1" fill="#46464a"/><rect x="10" y="2" width="1" height="1" fill="#46464a"/><rect x="14" y="2" width="1" height="1" fill="#46464a"/><rect x="18" y="2" width="1" height="1" fill="#46464a"/><rect x="22" y="2" width="1" height="1" fill="#46464a"/><rect x="26" y="2" width="1" height="1" fill="#46464a"/><rect x="30" y="2" width="1" height="1" fill="#46464a"/><rect x="34" y="2" width="1" height="1" fill="#46464a"/><rect x="38" y="2" width="1" height="1" fill="#46464a"/><rect x="42" y="2" width="1" height="1" fill="#46464a"/><rect x="46" y="2" width="1" height="1" fill="#46464a"/><rect x="50" y="2" width="1" height="1" fill="#46464a"/><rect x="54" y="2" width="1" height="1" fill="#46464a"/><rect x="58" y="2" width="1" height="1" fill="#46464a"/><rect x="62" y="2" width="1" height="1" fill="#46464a"/><rect x="66" y="2" width="1" height="1" fill="#46464a"/><rect x="70" y="2" width="1" height="1" fill="#46464a"/><rect x="74" y="2" width="1" height="1" fill="#46464a"/><rect x="78" y="2" width="1" height="1" fill="#46464a"/><rect x="82" y="2" width="1" height="1" fill="#46464a"/><rect x="86" y="2" width="1" height="1" fill="#46464a"/><rect x="90" y="2" width="1" height="1" fill="#46464a"/><rect x="94" y="2" width="1" height="1" fill="#46464a"/><rect x="98" y="2" width="1" height="1" fill="#46464a"/><rect x="102" y="2" width="1" height="1" fill="#46464a"/><rect x="106" y="2" width="1" height="1" fill="#46464a"/><rect x="110" y="2" width="1" height="1" fill="#46464a"/><rect x="114" y="2" width="1" height="1" fill="#46464a"/><rect x="118" y="2" width="1" height="1" fill="#46464a"/><rect x="122" y="2" width="1" height="1" fill="#46464a"/><rect x="126" y="2" width="1" height="1" fill="#46464a"/><rect x="130" y="2" width="1" height="1" fill="#46464a"/><rect x="134" y="2" width="1" height="1" fill="#46464a"/><rect x="138" y="2" width="1" height="1" fill="#46464a"/><rect x="142" y="2" width="1" height="1" fill="#46464a"/><rect x="146" y="2" width="1" height="1" fill="#46464a"/><rect x="150" y="2" width="1" height="1" fill="#46464a"/><rect x="154" y="2" width="1" height="1" fill="#46464a"/><rect x="158" y="2" width="1" height="1" fill="#46464a"/><rect x="162" y="2" width="1" height="1" fill="#46464a"/><rect x="166" y="2" width="1" height="1" fill="#46464a"/><rect x="170" y="2" width="1" height="1" fill="#46464a"/><rect x="174" y="2" width="1" height="1" fill="#46464a"/><rect x="178" y="2" width="1" height="1" fill="#46464a"/><rect x="182" y="2" width="1" height="1" fill="#46464a"/><rect x="186" y="2" width="1" height="1" fill="#46464a"/><rect x="190" y="2" width="1" height="1" fill="#46464a"/><rect x="194" y="2" width="1" height="1" fill="#46464a"/><rect x="198" y="2" width="1" height="1" fill="#46464a"/><rect x="202" y="2" width="1" height="1" fill="#46464a"/><rect x="206" y="2" width="1" height="1" fill="#46464a"/><rect x="210" y="2" width="1" height="1" fill="#46464a"/><rect x="214" y="2" width="1" height="1" fill="#46464a"/><rect x="218" y="2" width="1" height="1" fill="#46464a"/><rect x="222" y="2" width="1" height="1" fill="#46464a"/><rect x="226" y="2" width="1" height="1" fill="#46464a"/><rect x="230" y="2" width="1" height="1" fill="#46464a"/><rect x="234" y="2" width="1" height="1" fill="#46464a"/><rect x="238" y="2" width="1" height="1" fill="#46464a"/><rect x="242" y="2" width="1" height="1" fill="#46464a"/><rect x="246" y="2" width="1" height="1" fill="#46464a"/><rect x="250" y="2" width="1" height="1" fill="#46464a"/><rect x="254" y="2" width="1" height="1" fill="#46464a"/><rect x="258" y="2" width="1" height="1" fill="#46464a"/><rect x="262" y="2" width="1" height="1" fill="#46464a"/><rect x="266" y="2" width="1" height="1" fill="#46464a"/><rect x="270" y="2" width="1" height="1" fill="#46464a"/><rect x="274" y="2" width="1" height="1" fill="#46464a"/><rect x="278" y="2" width="1" height="1" fill="#46464a"/><rect x="282" y="2" width="1" height="1" fill="#46464a"/><rect x="286" y="2" width="1" height="1" fill="#46464a"/><rect x="290" y="2" width="1" height="1" fill="#46464a"/><rect x="294" y="2" width="1" height="1" fill="#46464a"/><rect x="298" y="2" width="1" height="1" fill="#46464a"/><rect x="302" y="2" width="1" height="1" fill="#46464a"/><rect x="306" y="2" width="1" height="1" fill="#46464a"/><rect x="310" y="2" width="1" height="1" fill="#46464a"/><rect x="314" y="2" width="1" height="1" fill="#46464a"/><rect x="318" y="2" width="1" height="1" fill="#46464a"/><rect x="322" y="2" width="1" height="1" fill="#46464a"/><rect x="326" y="2" width="1" height="1" fill="#46464a"/><rect x="330" y="2" width="1" height="1" fill="#46464a"/><rect x="334" y="2" width="1" height="1" fill="#46464a"/><rect x="338" y="2" width="1" height="1" fill="#46464a"/><rect x="342" y="2" width="1" height="1" fill="#46464a"/><rect x="346" y="2" width="1" height="1" fill="#46464a"/><rect x="350" y="2" width="1" height="1" fill="#46464a"/><rect x="354" y="2" width="1" height="1" fill="#46464a"/><rect x="358" y="2" width="1" height="1" fill="#46464a"/><rect x="362" y="2" width="1" height="1" fill="#46464a"/><rect x="366" y="2" width="1" height="1" fill="#46464a"/><rect x="370" y="2" width="1" height="1" fill="#46464a"/><rect x="0" y="4" width="1" height="1" fill="#46464a"/><rect x="4" y="4" width="1" height="1" fill="#46464a"/><rect x="8" y="4" width="1" height="1" fill="#46464a"/><rect x="12" y="4" width="1" height="1" fill="#46464a"/><rect x="16" y="4" width="1" height="1" fill="#46464a"/><rect x="20" y="4" width="1" height="1" fill="#46464a"/><rect x="24" y="4" width="1" height="1" fill="#46464a"/><rect x="28" y="4" width="1" height="1" fill="#46464a"/><rect x="32" y="4" width="1" height="1" fill="#46464a"/><rect x="36" y="4" width="1" height="1" fill="#46464a"/><rect x="40" y="4" width="1" height="1" fill="#46464a"/><rect x="44" y="4" width="1" height="1" fill="#46464a"/><rect x="48" y="4" width="1" height="1" fill="#46464a"/><rect x="52" y="4" width="1" height="1" fill="#46464a"/><rect x="56" y="4" width="1" height="1" fill="#46464a"/><rect x="60" y="4" width="1" height="1" fill="#46464a"/><rect x="64" y="4" width="1" height="1" fill="#46464a"/><rect x="68" y="4" width="1" height="1" fill="#46464a"/><rect x="72" y="4" width="1" height="1" fill="#46464a"/><rect x="76" y="4" width="1" height="1" fill="#46464a"/><rect x="80" y="4" width="1" height="1" fill="#46464a"/><rect x="84" y="4" width="1" height="1" fill="#46464a"/><rect x="88" y="4" width="1" height="1" fill="#46464a"/><rect x="92" y="4" width="1" height="1" fill="#46464a"/><rect x="96" y="4" width="1" height="1" fill="#46464a"/><rect x="100" y="4" width="1" height="1" fill="#46464a"/><rect x="104" y="4" width="1" height="1" fill="#46464a"/><rect x="108" y="4" width="1" height="1" fill="#46464a"/><rect x="112" y="4" width="1" height="1" fill="#46464a"/><rect x="116" y="4" width="1" height="1" fill="#46464a"/><rect x="120" y="4" width="1" height="1" fill="#46464a"/><rect x="124" y="4" width="1" height="1" fill="#46464a"/><rect x="128" y="4" width="1" height="1" fill="#46464a"/><rect x="132" y="4" width="1" height="1" fill="#46464a"/><rect x="136" y="4" width="1" height="1" fill="#46464a"/><rect x="140" y="4" width="1" height="1" fill="#46464a"/><rect x="144" y="4" width="1" height="1" fill="#46464a"/><rect x="148" y="4" width="1" height="1" fill="#46464a"/><rect x="152" y="4" width="1" height="1" fill="#46464a"/><rect x="156" y="4" width="1" height="1" fill="#46464a"/><rect x="160" y="4" width="1" height="1" fill="#46464a"/><rect x="164" y="4" width="1" height="1" fill="#46464a"/><rect x="168" y="4" width="1" height="1" fill="#46464a"/><rect x="172" y="4" width="1" height="1" fill="#46464a"/><rect x="176" y="4" width="1" height="1" fill="#46464a"/><rect x="180" y="4" width="1" height="1" fill="#46464a"/><rect x="184" y="4" width="1" height="1" fill="#46464a"/><rect x="188" y="4" width="1" height="1" fill="#46464a"/><rect x="192" y="4" width="1" height="1" fill="#46464a"/><rect x="196" y="4" width="1" height="1" fill="#46464a"/><rect x="200" y="4" width="1" height="1" fill="#46464a"/><rect x="204" y="4" width="1" height="1" fill="#46464a"/><rect x="208" y="4" width="1" height="1" fill="#46464a"/><rect x="212" y="4" width="1" height="1" fill="#46464a"/><rect x="216" y="4" width="1" height="1" fill="#46464a"/><rect x="220" y="4" width="1" height="1" fill="#46464a"/><rect x="224" y="4" width="1" height="1" fill="#46464a"/><rect x="228" y="4" width="1" height="1" fill="#46464a"/><rect x="232" y="4" width="1" height="1" fill="#46464a"/><rect x="236" y="4" width="1" height="1" fill="#46464a"/><rect x="240" y="4" width="1" height="1" fill="#46464a"/><rect x="244" y="4" width="1" height="1" fill="#46464a"/><rect x="248" y="4" width="1" height="1" fill="#46464a"/><rect x="252" y="4" width="1" height="1" fill="#46464a"/><rect x="256" y="4" width="1" height="1" fill="#46464a"/><rect x="260" y="4" width="1" height="1" fill="#46464a"/><rect x="264" y="4" width="1" height="1" fill="#46464a"/><rect x="268" y="4" width="1" height="1" fill="#46464a"/><rect x="272" y="4" width="1" height="1" fill="#46464a"/><rect x="276" y="4" width="1" height="1" fill="#46464a"/><rect x="280" y="4" width="1" height="1" fill="#46464a"/><rect x="284" y="4" width="1" height="1" fill="#46464a"/><rect x="288" y="4" width="1" height="1" fill="#46464a"/><rect x="292" y="4" width="1" height="1" fill="#46464a"/><rect x="296" y="4" width="1" height="1" fill="#46464a"/><rect x="300" y="4" width="1" height="1" fill="#46464a"/><rect x="304" y="4" width="1" height="1" fill="#46464a"/><rect x="308" y="4" width="1" height="1" fill="#46464a"/><rect x="312" y="4" width="1" height="1" fill="#46464a"/><rect x="316" y="4" width="1" height="1" fill="#46464a"/><rect x="320" y="4" width="1" height="1" fill="#46464a"/><rect x="324" y="4" width="1" height="1" fill="#46464a"/><rect x="328" y="4" width="1" height="1" fill="#46464a"/><rect x="332" y="4" width="1" height="1" fill="#46464a"/><rect x="336" y="4" width="1" height="1" fill="#46464a"/><rect x="340" y="4" width="1" height="1" fill="#46464a"/><rect x="344" y="4" width="1" height="1" fill="#46464a"/><rect x="348" y="4" width="1" height="1" fill="#46464a"/><rect x="352" y="4" width="1" height="1" fill="#46464a"/><rect x="356" y="4" width="1" height="1" fill="#46464a"/><rect x="360" y="4" width="1" height="1" fill="#46464a"/><rect x="364" y="4" width="1" height="1" fill="#46464a"/><rect x="368" y="4" width="1" height="1" fill="#46464a"/><rect x="372" y="4" width="1" height="1" fill="#46464a"/></svg>
<svg class="a" style="left:607px;top:642px;" width="8" height="5" viewBox="0 0 8 5"><polygon points="0,0 8,0 4,4.5" fill="#f1f1f1"/></svg>
<svg class="a" style="left:623px;top:639px;" width="9" height="11" viewBox="0 0 9 11"><path d="M2 0.5 H7 M2.5 0.5 V6 M6.5 0.5 V6 M1 6.5 H8 M4.5 7 V11" stroke="#f1f1f1" stroke-width="1" fill="none"/><rect x="5" y="1" width="1.5" height="5" fill="#f1f1f1"/></svg>
<svg class="a" style="left:639px;top:640px;" width="10" height="9" viewBox="0 0 10 9"><path d="M0.8 0.5 L9.2 8 M9.2 0.5 L0.8 8" stroke="#f1f1f1" stroke-width="1.6" fill="none"/></svg>
<div class="t" style="left:178.00px;top:663px;font-size:10.737px;line-height:12px;color:#6d6d6d;font-family:'Liberation Sans', sans-serif;">Search:</div>
<div class="a" style="left:222px;top:658px;width:270px;height:22px;background:#2d2d30;box-sizing:border-box;border:1px solid #3f3f46;"></div>
<svg class="a" style="left:482px;top:668px;" width="6" height="4" viewBox="0 0 6 4"><polygon points="0,0 6,0 3.0,3.0" fill="#505050"/></svg>
<svg class="a" style="left:499px;top:664px;" width="13" height="12" viewBox="0 0 13 12"><path d="M0.8 0.8 L12.2 11.2 M12.2 0.8 L0.8 11.2" stroke="#5a5a5a" stroke-width="2"/></svg>
<div class="t" style="left:520.00px;top:664px;font-size:11.157px;line-height:12px;color:#6d6d6d;font-family:'Liberation Sans', sans-serif;">Search Call Stack</div>
<div class="a" style="left:621px;top:660px;width:1px;height:18px;background:#46464a;"></div>
<svg class="a" style="left:647px;top:660px;" width="7" height="4" viewBox="0 0 7 4"><polygon points="0,0 2.5,1.5 0,3" fill="#999"/><polygon points="4,0 6.5,1.5 4,3" fill="#999"/></svg>
<div class="a" style="left:171px;top:683px;width:484px;height:242px;background:#252526;"></div>
<div class="a" style="left:173px;top:698px;width:480px;height:1px;background:#3f3f46;"></div>
<div class="a" style="left:173px;top:722px;width:480px;height:1px;background:#3f3f46;"></div>
<div class="a" style="left:200px;top:698px;width:1px;height:24px;background:#3f3f46;"></div>
<div class="a" style="left:223px;top:698px;width:1px;height:24px;background:#3f3f46;"></div>
<div class="a" style="left:262px;top:698px;width:1px;height:24px;background:#3f3f46;"></div>
<div class="a" style="left:354px;top:698px;width:1px;height:24px;background:#3f3f46;"></div>
<div class="a" style="left:430px;top:698px;width:1px;height:24px;background:#3f3f46;"></div>
<div class="a" style="left:490px;top:698px;width:1px;height:24px;background:#3f3f46;"></div>
<div class="a" style="left:564px;top:698px;width:1px;height:24px;background:#3f3f46;"></div>
<div class="t" style="left:234.00px;top:704px;font-size:12.500px;line-height:14px;color:#f1f1f1;font-family:'Liberation Sans', sans-serif;">ID</div>
<div class="t" style="left:273.00px;top:704px;font-size:11.931px;line-height:14px;color:#f1f1f1;font-family:'Liberation Sans', sans-serif;">Managed ID</div>
<div class="t" style="left:365.00px;top:704px;font-size:11.705px;line-height:13px;color:#f1f1f1;font-family:'Liberation Sans', sans-serif;">Category</div>
<div class="t" style="left:441.00px;top:704px;font-size:11.994px;line-height:14px;color:#f1f1f1;font-family:'Liberation Sans', sans-serif;">Name</div>
<div class="t" style="left:501.00px;top:704px;font-size:12.034px;line-height:14px;color:#f1f1f1;font-family:'Liberation Sans', sans-serif;">Location</div>
<div class="a" style="left:662px;top:633px;width:492px;height:292px;background:#2d2d30;box-sizing:border-box;border:1px solid #3f3f46;"></div>
<div class="t" style="left:667.00px;top:638px;font-size:11.892px;line-height:14px;color:#d0d0d0;font-family:'Liberation Sans', sans-serif;">Linux Console Window</div>
<svg class="a" style="left:795px;top:642px;" width="303" height="5" viewBox="0 0 303 5"><rect x="0" y="0" width="1" height="1" fill="#46464a"/><rect x="4" y="0" width="1" height="1" fill="#46464a"/><rect x="8" y="0" width="1" height="1" fill="#46464a"/><rect x="12" y="0" width="1" height="1" fill="#46464a"/><rect x="16" y="0" width="1" height="1" fill="#46464a"/><rect x="20" y="0" width="1" height="1" fill="#46464a"/><rect x="24" y="0" width="1" height="1" fill="#46464a"/><rect x="28" y="0" width="1" height="1" fill="#46464a"/><rect x="32" y="0" width="1" height="1" fill="#46464a"/><rect x="36" y="0" width="1" height="1" fill="#46464a"/><rect x="40" y="0" width="1" height="1" fill="#46464a"/><rect x="44" y="0" width="1" height="1" fill="#46464a"/><rect x="48" y="0" width="1" height="1" fill="#46464a"/><rect x="52" y="0" width="1" height="1" fill="#46464a"/><rect x="56" y="0" width="1" height="1" fill="#46464a"/><rect x="60" y="0" width="1" height="1" fill="#46464a"/><rect x="64" y="0" width="1" height="1" fill="#46464a"/><rect x="68" y="0" width="1" height="1" fill="#46464a"/><rect x="72" y="0" width="1" height="1" fill="#46464a"/><rect x="76" y="0" width="1" height="1" fill="#46464a"/><rect x="80" y="0" width="1" height="1" fill="#46464a"/><rect x="84" y="0" width="1" height="1" fill="#46464a"/><rect x="88" y="0" width="1" height="1" fill="#46464a"/><rect x="92" y="0" width="1" height="1" fill="#46464a"/><rect x="96" y="0" width="1" height="1" fill="#46464a"/><rect x="100" y="0" width="1" height="1" fill="#46464a"/><rect x="104" y="0" width="1" height="1" fill="#46464a"/><rect x="108" y="0" width="1" height="1" fill="#46464a"/><rect x="112" y="0" width="1" height="1" fill="#46464a"/><rect x="116" y="0" width="1" height="1" fill="#46464a"/><rect x="120" y="0" width="1" height="1" fill="#46464a"/><rect x="124" y="0" width="1" height="1" fill="#46464a"/><rect x="128" y="0" width="1" height="1" fill="#46464a"/><rect x="132" y="0" width="1" height="1" fill="#46464a"/><rect x="136" y="0" width="1" height="1" fill="#46464a"/><rect x="140" y="0" width="1" height="1" fill="#46464a"/><rect x="144" y="0" width="1" height="1" fill="#46464a"/><rect x="148" y="0" width="1" height="1" fill="#46464a"/><rect x="152" y="0" width="1" height="1" fill="#46464a"/><rect x="156" y="0" width="1" height="1" fill="#46464a"/><rect x="160" y="0" width="1" height="1" fill="#46464a"/><rect x="164" y="0" width="1" height="1" fill="#46464a"/><rect x="168" y="0" width="1" height="1" fill="#46464a"/><rect x="172" y="0" width="1" height="1" fill="#46464a"/><rect x="176" y="0" width="1" height="1" fill="#46464a"/><rect x="180" y="0" width="1" height="1" fill="#46464a"/><rect x="184" y="0" width="1" height="1" fill="#46464a"/><rect x="188" y="0" width="1" height="1" fill="#46464a"/><rect x="192" y="0" width="1" height="1" fill="#46464a"/><rect x="196" y="0" width="1" height="1" fill="#46464a"/><rect x="200" y="0" width="1" height="1" fill="#46464a"/><rect x="204" y="0" width="1" height="1" fill="#46464a"/><rect x="208" y="0" width="1" height="1" fill="#46464a"/><rect x="212" y="0" width="1" height="1" fill="#46464a"/><rect x="216" y="0" width="1" height="1" fill="#46464a"/><rect x="220" y="0" width="1" height="1" fill="#46464a"/><rect x="224" y="0" width="1" height="1" fill="#46464a"/><rect x="228" y="0" width="1" height="1" fill="#46464a"/><rect x="232" y="0" width="1" height="1" fill="#46464a"/><rect x="236" y="0" width="1" height="1" fill="#46464a"/><rect x="240" y="0" width="1" height="1" fill="#46464a"/><rect x="244" y="0" width="1" height="1" fill="#46464a"/><rect x="248" y="0" width="1" height="1" fill="#46464a"/><rect x="252" y="0" width="1" height="1" fill="#46464a"/><rect x="256" y="0" width="1" height="1" fill="#46464a"/><rect x="260" y="0" width="1" height="1" fill="#46464a"/><rect x="264" y="0" width="1" height="1" fill="#46464a"/><rect x="268" y="0" width="1" height="1" fill="#46464a"/><rect x="272" y="0" width="1" height="1" fill="#46464a"/><rect x="276" y="0" width="1" height="1" fill="#46464a"/><rect x="280" y="0" width="1" height="1" fill="#46464a"/><rect x="284" y="0" width="1" height="1" fill="#46464a"/><rect x="288" y="0" width="1" height="1" fill="#46464a"/><rect x="292" y="0" width="1" height="1" fill="#46464a"/><rect x="296" y="0" width="1" height="1" fill="#46464a"/><rect x="300" y="0" width="1" height="1" fill="#46464a"/><rect x="2" y="2" width="1" height="1" fill="#46464a"/><rect x="6" y="2" width="1" height="1" fill="#46464a"/><rect x="10" y="2" width="1" height="1" fill="#46464a"/><rect x="14" y="2" width="1" height="1" fill="#46464a"/><rect x="18" y="2" width="1" height="1" fill="#46464a"/><rect x="22" y="2" width="1" height="1" fill="#46464a"/><rect x="26" y="2" width="1" height="1" fill="#46464a"/><rect x="30" y="2" width="1" height="1" fill="#46464a"/><rect x="34" y="2" width="1" height="1" fill="#46464a"/><rect x="38" y="2" width="1" height="1" fill="#46464a"/><rect x="42" y="2" width="1" height="1" fill="#46464a"/><rect x="46" y="2" width="1" height="1" fill="#46464a"/><rect x="50" y="2" width="1" height="1" fill="#46464a"/><rect x="54" y="2" width="1" height="1" fill="#46464a"/><rect x="58" y="2" width="1" height="1" fill="#46464a"/><rect x="62" y="2" width="1" height="1" fill="#46464a"/><rect x="66" y="2" width="1" height="1" fill="#46464a"/><rect x="70" y="2" width="1" height="1" fill="#46464a"/><rect x="74" y="2" width="1" height="1" fill="#46464a"/><rect x="78" y="2" width="1" height="1" fill="#46464a"/><rect x="82" y="2" width="1" height="1" fill="#46464a"/><rect x="86" y="2" width="1" height="1" fill="#46464a"/><rect x="90" y="2" width="1" height="1" fill="#46464a"/><rect x="94" y="2" width="1" height="1" fill="#46464a"/><rect x="98" y="2" width="1" height="1" fill="#46464a"/><rect x="102" y="2" width="1" height="1" fill="#46464a"/><rect x="106" y="2" width="1" height="1" fill="#46464a"/><rect x="110" y="2" width="1" height="1" fill="#46464a"/><rect x="114" y="2" width="1" height="1" fill="#46464a"/><rect x="118" y="2" width="1" height="1" fill="#46464a"/><rect x="122" y="2" width="1" height="1" fill="#46464a"/><rect x="126" y="2" width="1" height="1" fill="#46464a"/><rect x="130" y="2" width="1" height="1" fill="#46464a"/><rect x="134" y="2" width="1" height="1" fill="#46464a"/><rect x="138" y="2" width="1" height="1" fill="#46464a"/><rect x="142" y="2" width="1" height="1" fill="#46464a"/><rect x="146" y="2" width="1" height="1" fill="#46464a"/><rect x="150" y="2" width="1" height="1" fill="#46464a"/><rect x="154" y="2" width="1" height="1" fill="#46464a"/><rect x="158" y="2" width="1" height="1" fill="#46464a"/><rect x="162" y="2" width="1" height="1" fill="#46464a"/><rect x="166" y="2" width="1" height="1" fill="#46464a"/><rect x="170" y="2" width="1" height="1" fill="#46464a"/><rect x="174" y="2" width="1" height="1" fill="#46464a"/><rect x="178" y="2" width="1" height="1" fill="#46464a"/><rect x="182" y="2" width="1" height="1" fill="#46464a"/><rect x="186" y="2" width="1" height="1" fill="#46464a"/><rect x="190" y="2" width="1" height="1" fill="#46464a"/><rect x="194" y="2" width="1" height="1" fill="#46464a"/><rect x="198" y="2" width="1" height="1" fill="#46464a"/><rect x="202" y="2" width="1" height="1" fill="#46464a"/><rect x="206" y="2" width="1" height="1" fill="#46464a"/><rect x="210" y="2" width="1" height="1" fill="#46464a"/><rect x="214" y="2" width="1" height="1" fill="#46464a"/><rect x="218" y="2" width="1" height="1" fill="#46464a"/><rect x="222" y="2" width="1" height="1" fill="#46464a"/><rect x="226" y="2" width="1" height="1" fill="#46464a"/><rect x="230" y="2" width="1" height="1" fill="#46464a"/><rect x="234" y="2" width="1" height="1" fill="#46464a"/><rect x="238" y="2" width="1" height="1" fill="#46464a"/><rect x="242" y="2" width="1" height="1" fill="#46464a"/><rect x="246" y="2" width="1" height="1" fill="#46464a"/><rect x="250" y="2" width="1" height="1" fill="#46464a"/><rect x="254" y="2" width="1" height="1" fill="#46464a"/><rect x="258" y="2" width="1" height="1" fill="#46464a"/><rect x="262" y="2" width="1" height="1" fill="#46464a"/><rect x="266" y="2" width="1" height="1" fill="#46464a"/><rect x="270" y="2" width="1" height="1" fill="#46464a"/><rect x="274" y="2" width="1" height="1" fill="#46464a"/><rect x="278" y="2" width="1" height="1" fill="#46464a"/><rect x="282" y="2" width="1" height="1" fill="#46464a"/><rect x="286" y="2" width="1" height="1" fill="#46464a"/><rect x="290" y="2" width="1" height="1" fill="#46464a"/><rect x="294" y="2" width="1" height="1" fill="#46464a"/><rect x="298" y="2" width="1" height="1" fill="#46464a"/><rect x="302" y="2" width="1" height="1" fill="#46464a"/><rect x="0" y="4" width="1" height="1" fill="#46464a"/><rect x="4" y="4" width="1" height="1" fill="#46464a"/><rect x="8" y="4" width="1" height="1" fill="#46464a"/><rect x="12" y="4" width="1" height="1" fill="#46464a"/><rect x="16" y="4" width="1" height="1" fill="#46464a"/><rect x="20" y="4" width="1" height="1" fill="#46464a"/><rect x="24" y="4" width="1" height="1" fill="#46464a"/><rect x="28" y="4" width="1" height="1" fill="#46464a"/><rect x="32" y="4" width="1" height="1" fill="#46464a"/><rect x="36" y="4" width="1" height="1" fill="#46464a"/><rect x="40" y="4" width="1" height="1" fill="#46464a"/><rect x="44" y="4" width="1" height="1" fill="#46464a"/><rect x="48" y="4" width="1" height="1" fill="#46464a"/><rect x="52" y="4" width="1" height="1" fill="#46464a"/><rect x="56" y="4" width="1" height="1" fill="#46464a"/><rect x="60" y="4" width="1" height="1" fill="#46464a"/><rect x="64" y="4" width="1" height="1" fill="#46464a"/><rect x="68" y="4" width="1" height="1" fill="#46464a"/><rect x="72" y="4" width="1" height="1" fill="#46464a"/><rect x="76" y="4" width="1" height="1" fill="#46464a"/><rect x="80" y="4" width="1" height="1" fill="#46464a"/><rect x="84" y="4" width="1" height="1" fill="#46464a"/><rect x="88" y="4" width="1" height="1" fill="#46464a"/><rect x="92" y="4" width="1" height="1" fill="#46464a"/><rect x="96" y="4" width="1" height="1" fill="#46464a"/><rect x="100" y="4" width="1" height="1" fill="#46464a"/><rect x="104" y="4" width="1" height="1" fill="#46464a"/><rect x="108" y="4" width="1" height="1" fill="#46464a"/><rect x="112" y="4" width="1" height="1" fill="#46464a"/><rect x="116" y="4" width="1" height="1" fill="#46464a"/><rect x="120" y="4" width="1" height="1" fill="#46464a"/><rect x="124" y="4" width="1" height="1" fill="#46464a"/><rect x="128" y="4" width="1" height="1" fill="#46464a"/><rect x="132" y="4" width="1" height="1" fill="#46464a"/><rect x="136" y="4" width="1" height="1" fill="#46464a"/><rect x="140" y="4" width="1" height="1" fill="#46464a"/><rect x="144" y="4" width="1" height="1" fill="#46464a"/><rect x="148" y="4" width="1" height="1" fill="#46464a"/><rect x="152" y="4" width="1" height="1" fill="#46464a"/><rect x="156" y="4" width="1" height="1" fill="#46464a"/><rect x="160" y="4" width="1" height="1" fill="#46464a"/><rect x="164" y="4" width="1" height="1" fill="#46464a"/><rect x="168" y="4" width="1" height="1" fill="#46464a"/><rect x="172" y="4" width="1" height="1" fill="#46464a"/><rect x="176" y="4" width="1" height="1" fill="#46464a"/><rect x="180" y="4" width="1" height="1" fill="#46464a"/><rect x="184" y="4" width="1" height="1" fill="#46464a"/><rect x="188" y="4" width="1" height="1" fill="#46464a"/><rect x="192" y="4" width="1" height="1" fill="#46464a"/><rect x="196" y="4" width="1" height="1" fill="#46464a"/><rect x="200" y="4" width="1" height="1" fill="#46464a"/><rect x="204" y="4" width="1" height="1" fill="#46464a"/><rect x="208" y="4" width="1" height="1" fill="#46464a"/><rect x="212" y="4" width="1" height="1" fill="#46464a"/><rect x="216" y="4" width="1" height="1" fill="#46464a"/><rect x="220" y="4" width="1" height="1" fill="#46464a"/><rect x="224" y="4" width="1" height="1" fill="#46464a"/><rect x="228" y="4" width="1" height="1" fill="#46464a"/><rect x="232" y="4" width="1" height="1" fill="#46464a"/><rect x="236" y="4" width="1" height="1" fill="#46464a"/><rect x="240" y="4" width="1" height="1" fill="#46464a"/><rect x="244" y="4" width="1" height="1" fill="#46464a"/><rect x="248" y="4" width="1" height="1" fill="#46464a"/><rect x="252" y="4" width="1" height="1" fill="#46464a"/><rect x="256" y="4" width="1" height="1" fill="#46464a"/><rect x="260" y="4" width="1" height="1" fill="#46464a"/><rect x="264" y="4" width="1" height="1" fill="#46464a"/><rect x="268" y="4" width="1" height="1" fill="#46464a"/><rect x="272" y="4" width="1" height="1" fill="#46464a"/><rect x="276" y="4" width="1" height="1" fill="#46464a"/><rect x="280" y="4" width="1" height="1" fill="#46464a"/><rect x="284" y="4" width="1" height="1" fill="#46464a"/><rect x="288" y="4" width="1" height="1" fill="#46464a"/><rect x="292" y="4" width="1" height="1" fill="#46464a"/><rect x="296" y="4" width="1" height="1" fill="#46464a"/><rect x="300" y="4" width="1" height="1" fill="#46464a"/></svg>
<svg class="a" style="left:1105px;top:643px;" width="8" height="5" viewBox="0 0 8 5"><polygon points="0,0 8,0 4,4.5" fill="#f1f1f1"/></svg>
<svg class="a" style="left:1121px;top:638px;" width="9" height="11" viewBox="0 0 9 11"><path d="M2 0.5 H7 M2.5 0.5 V6 M6.5 0.5 V6 M1 6.5 H8 M4.5 7 V11" stroke="#f1f1f1" stroke-width="1" fill="none"/><rect x="5" y="1" width="1.5" height="5" fill="#f1f1f1"/></svg>
<svg class="a" style="left:1137px;top:640px;" width="10" height="9" viewBox="0 0 10 9"><path d="M0.8 0.5 L9.2 8 M9.2 0.5 L0.8 8" stroke="#f1f1f1" stroke-width="1.6" fill="none"/></svg>
<div class="a" style="left:663px;top:655px;width:490px;height:269px;background:#252526;box-sizing:border-box;border-top:1px solid #3f3f46;"></div>
<div class="t" style="left:666px;top:658px;font-size:11.85px;letter-spacing:-0.110px;line-height:14px;color:#f1f1f1;font-family:'Liberation Mono',monospace;">hello from opencvTest!</div>
<div class="t" style="left:666px;top:673px;font-size:11.85px;letter-spacing:-0.110px;line-height:14px;color:#f1f1f1;font-family:'Liberation Mono',monospace;">Just load an image and save with different name</div>
<div class="t" style="left:666px;top:688px;font-size:11.85px;letter-spacing:-0.110px;line-height:14px;color:#f1f1f1;font-family:'Liberation Mono',monospace;">hello from OpencvLinux!</div>
<div class="a" style="left:3px;top:925px;width:94px;height:21px;background:#252526;box-sizing:border-box;border:1px solid #3f3f46;border-top:none;"></div>
<div class="t" style="left:9.00px;top:929px;font-size:11.394px;line-height:12px;color:#0097fb;font-family:'Liberation Sans', sans-serif;">Solution Expl...</div>
<div class="t" style="left:103.50px;top:930px;font-size:11.053px;line-height:12px;color:#f1f1f1;font-family:'Liberation Sans', sans-serif;">Class View</div>
<div class="t" style="left:176.50px;top:929px;font-size:11.732px;line-height:13px;color:#f1f1f1;font-family:'Liberation Sans', sans-serif;">Autos</div>
<div class="t" style="left:219.00px;top:930px;font-size:11.415px;line-height:12px;color:#f1f1f1;font-family:'Liberation Sans', sans-serif;">Locals</div>
<div class="a" style="left:258px;top:925px;width:54px;height:21px;background:#252526;box-sizing:border-box;border:1px solid #3f3f46;border-top:none;"></div>
<div class="t" style="left:264.00px;top:929px;font-size:11.314px;line-height:12px;color:#0097fb;font-family:'Liberation Sans', sans-serif;">Threads</div>
<div class="t" style="left:318.00px;top:929px;font-size:12.037px;line-height:14px;color:#f1f1f1;font-family:'Liberation Sans', sans-serif;">Modules</div>
<div class="t" style="left:376.00px;top:930px;font-size:11.567px;line-height:12px;color:#f1f1f1;font-family:'Liberation Sans', sans-serif;">Watch 1</div>
<div class="a" style="left:662px;top:925px;width:133px;height:21px;background:#252526;box-sizing:border-box;border:1px solid #3f3f46;border-top:none;"></div>
<div class="t" style="left:668.00px;top:928px;font-size:11.892px;line-height:14px;color:#0097fb;font-family:'Liberation Sans', sans-serif;">Linux Console Window</div>
<div class="t" style="left:801.00px;top:930px;font-size:11.326px;line-height:12px;color:#f1f1f1;font-family:'Liberation Sans', sans-serif;">Call Stack</div>
<div class="t" style="left:864.00px;top:929px;font-size:11.683px;line-height:13px;color:#f1f1f1;font-family:'Liberation Sans', sans-serif;">Breakpoints</div>
<div class="t" style="left:938.00px;top:930px;font-size:11.542px;line-height:12px;color:#f1f1f1;font-family:'Liberation Sans', sans-serif;">Exception Settings</div>
<div class="t" style="left:1046.00px;top:929px;font-size:12.525px;line-height:14px;color:#f1f1f1;font-family:'Liberation Sans', sans-serif;">Output</div>
<div class="a" style="left:0px;top:952px;width:1159px;height:23px;background:#ca5100;"></div>
<svg class="a" style="left:1px;top:959px;" width="17" height="11" viewBox="0 0 17 11"><path d="M3.2 0.7 H16 L13.8 10.3 H1 Z" stroke="#fff" stroke-width="1.3" fill="none"/><path d="M4.8 3.6 H11 M4.3 5.6 H11.5" stroke="#fff" stroke-width="1"/><path d="M11.5 2.6 L13.8 1.9" stroke="#fff" stroke-width="1"/></svg>
<div class="t" style="left:381.00px;top:958px;font-size:11.191px;line-height:12px;color:#ffffff;font-family:'Liberation Sans', sans-serif;">Ln 12</div>
<div class="t" style="left:473.00px;top:958px;font-size:11.140px;line-height:12px;color:#ffffff;font-family:'Liberation Sans', sans-serif;">Col 1</div>
<div class="t" style="left:565.00px;top:958px;font-size:11.364px;line-height:12px;color:#ffffff;font-family:'Liberation Sans', sans-serif;">Ch 1</div>
<div class="t" style="left:701.00px;top:958px;font-size:10.798px;line-height:12px;color:#ffffff;font-family:'Liberation Sans', sans-serif;">INS</div>
<svg class="a" style="left:976px;top:959px;" width="9" height="11" viewBox="0 0 9 11"><path d="M4.2 4 V11" stroke="#d8e0e8" stroke-width="2.4"/><polygon points="4.2,0 8.6,5 0,5" fill="#d8e0e8"/></svg>
<div class="t" style="left:993.60px;top:957px;font-size:12.034px;line-height:14px;color:#ffffff;font-family:'Liberation Sans', sans-serif;">Add to Source Control</div>
<svg class="a" style="left:1118px;top:962px;" width="8" height="5" viewBox="0 0 8 5"><polygon points="0,4.5 8,4.5 4,0" fill="#fff"/></svg>
<svg class="a" style="left:1145px;top:962px;" width="10" height="10" viewBox="0 0 10 10"><rect x="8" y="0" width="1" height="1" fill="#e8a070"/><rect x="6" y="2" width="1" height="1" fill="#e8a070"/><rect x="8" y="2" width="1" height="1" fill="#e8a070"/><rect x="4" y="4" width="1" height="1" fill="#e8a070"/><rect x="6" y="4" width="1" height="1" fill="#e8a070"/><rect x="8" y="4" width="1" height="1" fill="#e8a070"/><rect x="2" y="6" width="1" height="1" fill="#e8a070"/><rect x="4" y="6" width="1" height="1" fill="#e8a070"/><rect x="6" y="6" width="1" height="1" fill="#e8a070"/><rect x="8" y="6" width="1" height="1" fill="#e8a070"/></svg>
</body></html>
